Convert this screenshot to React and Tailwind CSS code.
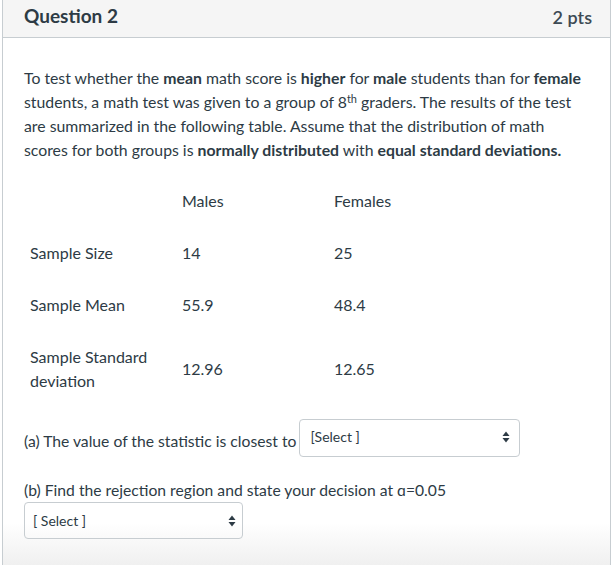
import React from "react";

function Arrows() {
  return (
    <svg width="8" height="12" viewBox="0 0 8 12" className="shrink-0">
      <path d="M4 0.5 L7.5 5 L0.5 5 Z" fill="#2d3b45" />
      <path d="M4 11.5 L7.5 7 L0.5 7 Z" fill="#2d3b45" />
    </svg>
  );
}

export default function App() {
  const font = { fontFamily: "Lato, 'Noto Sans', sans-serif" };
  return (
    <div className="w-[613px] h-[565px] bg-white overflow-hidden" style={font}>
      <div className="ml-[2px] w-[609px] h-[565px] border-x border-[#c7cdd1] flex flex-col text-[#2d3b45]">
        <div className="h-[38px] shrink-0 bg-[#f5f5f5] border-b border-[#c7cdd1] flex items-start justify-between pl-[21px] pr-[18px] pt-[6px]">
          <span className="text-[19px] font-bold leading-[20px]">Question 2</span>
          <span className="text-[18px] font-semibold leading-[20px] pt-[1px] text-[#3d4a54]">2 pts</span>
        </div>
        <div className="flex-1 flex flex-col pl-[21px] pr-[20px] pt-[28px] bg-gradient-to-b from-white from-[92%] to-[#f0f0f0]">
          <p className="text-[15.8px] leading-[24px]">
            To test whether the <b>mean</b> math score is <b>higher</b> for <b>male</b> students than for <b>female</b> students, a math test was given to a group of 8<sup className="text-[11px]">th</sup> graders. The results of the test are summarized in the following table. Assume that the distribution of math scores for both groups is <b>normally distributed</b> with <b>equal standard deviations.</b>
          </p>
          <table className="mt-[13px] text-[16px] leading-[24px] border-collapse">
            <tbody>
              <tr>
                <td className="w-[152px] px-[6px] py-[14px]"></td>
                <td className="w-[152px] px-[6px] py-[14px]">Males</td>
                <td className="w-[152px] px-[6px] py-[14px]">Females</td>
                <td></td>
              </tr>
              <tr>
                <td className="px-[6px] py-[14px]">Sample Size</td>
                <td className="px-[6px] py-[14px]">14</td>
                <td className="px-[6px] py-[14px]">25</td>
                <td></td>
              </tr>
              <tr>
                <td className="px-[6px] py-[14px]">Sample Mean</td>
                <td className="px-[6px] py-[14px]">55.9</td>
                <td className="px-[6px] py-[14px]">48.4</td>
                <td></td>
              </tr>
              <tr>
                <td className="px-[6px] py-[14px]">Sample Standard<br />deviation</td>
                <td className="px-[6px] py-[14px]">12.96</td>
                <td className="px-[6px] py-[14px]">12.65</td>
                <td></td>
              </tr>
            </tbody>
          </table>
          <div className="mt-[12px] flex items-center text-[15.7px] leading-[24px]">
            <span className="pt-[6px]">(a) The value of the statistic is closest to</span>
            <div className="ml-[3px] w-[221px] h-[38px] border border-[#c7cdd1] rounded-[4px] flex items-start justify-between pl-[10px] pr-[9px] pt-[7px]">
              <span className="text-[14px] leading-[20px]">[Select ]</span>
              <span className="pt-[4px]"><Arrows /></span>
            </div>
          </div>
          <div className="mt-[21px] text-[15.7px] leading-[24px]">(b) Find the rejection region and state your decision at ɑ=0.05</div>
          <div className="w-[219px] h-[37px] border border-[#c7cdd1] rounded-[4px] flex items-center justify-between pl-[8px] pr-[6px]">
            <span className="text-[14px] leading-[20px]">[ Select ]</span>
            <Arrows />
          </div>
        </div>
      </div>
    </div>
  );
}
